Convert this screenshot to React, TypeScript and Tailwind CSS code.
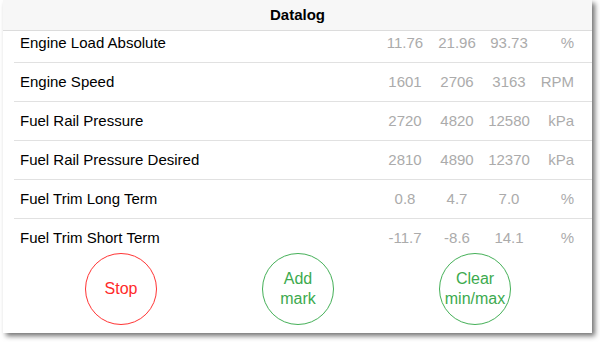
import React from 'react';

type Row = { label: string; min: string; avg: string; max: string; unit: string };

const rows: Row[] = [
    { label: 'Engine Load Absolute', min: '11.76', avg: '21.96', max: '93.73', unit: '%' },
    { label: 'Engine Speed', min: '1601', avg: '2706', max: '3163', unit: 'RPM' },
    { label: 'Fuel Rail Pressure', min: '2720', avg: '4820', max: '12580', unit: 'kPa' },
    { label: 'Fuel Rail Pressure Desired', min: '2810', avg: '4890', max: '12370', unit: 'kPa' },
    { label: 'Fuel Trim Long Term', min: '0.8', avg: '4.7', max: '7.0', unit: '%' },
    { label: 'Fuel Trim Short Term', min: '-11.7', avg: '-8.6', max: '14.1', unit: '%' },
];

const DataRow: React.FC<{ row: Row; last?: boolean }> = ({ row, last }) => (
    <div className="pl-[11px]">
        <div className={`h-[39px] flex items-center pl-[6px] pr-[18px] ${last ? '' : 'border-b border-[#e1e1e1]'}`}>
            <span className="flex-1 text-black">{row.label}</span>
            <span className="w-[52px] text-center text-[#ababab]">{row.min}</span>
            <span className="w-[52px] text-center text-[#ababab]">{row.avg}</span>
            <span className="w-[52px] text-center text-[#ababab]">{row.max}</span>
            <span className="w-[39px] text-right text-[#ababab]">{row.unit}</span>
        </div>
    </div>
);

const CircleButton: React.FC<{ color: 'red' | 'green'; children: React.ReactNode }> = ({ color, children }) => (
    <button
        className={`w-[72px] h-[72px] rounded-full border flex items-center justify-center text-[16px] leading-[20px] text-center ${
            color === 'red' ? 'border-[#ff3434] text-[#ff2a2a]' : 'border-[#45b058] text-[#3caa4e]'
        }`}
    >
        {children}
    </button>
);

export default function App() {
    return (
        <div className="w-[600px] h-[342px] bg-white" style={{ fontFamily: '"Liberation Sans", Arial, sans-serif' }}>
            <div className="ml-[3px] w-[589px] h-[333px] bg-white flex flex-col overflow-hidden shadow-[3px_3px_5px_rgba(0,0,0,0.55)] text-[15px]">
                <div className="h-[31px] shrink-0 bg-[#f7f7f7] border-b border-[#dcdcdc] flex items-center justify-center font-bold text-black">
                    Datalog
                </div>
                <div className="h-[219px] shrink-0 overflow-hidden">
                    <div className="-mt-[7px]">
                        {rows.map((r, i) => (
                            <DataRow key={r.label} row={r} last={i === rows.length - 1} />
                        ))}
                    </div>
                </div>
                <div className="flex-1 flex justify-center gap-[105px] pt-[3px] pl-[1px]">
                    <CircleButton color="red">Stop</CircleButton>
                    <CircleButton color="green">Add<br />mark</CircleButton>
                    <CircleButton color="green">Clear<br />min/max</CircleButton>
                </div>
            </div>
        </div>
    );
}
